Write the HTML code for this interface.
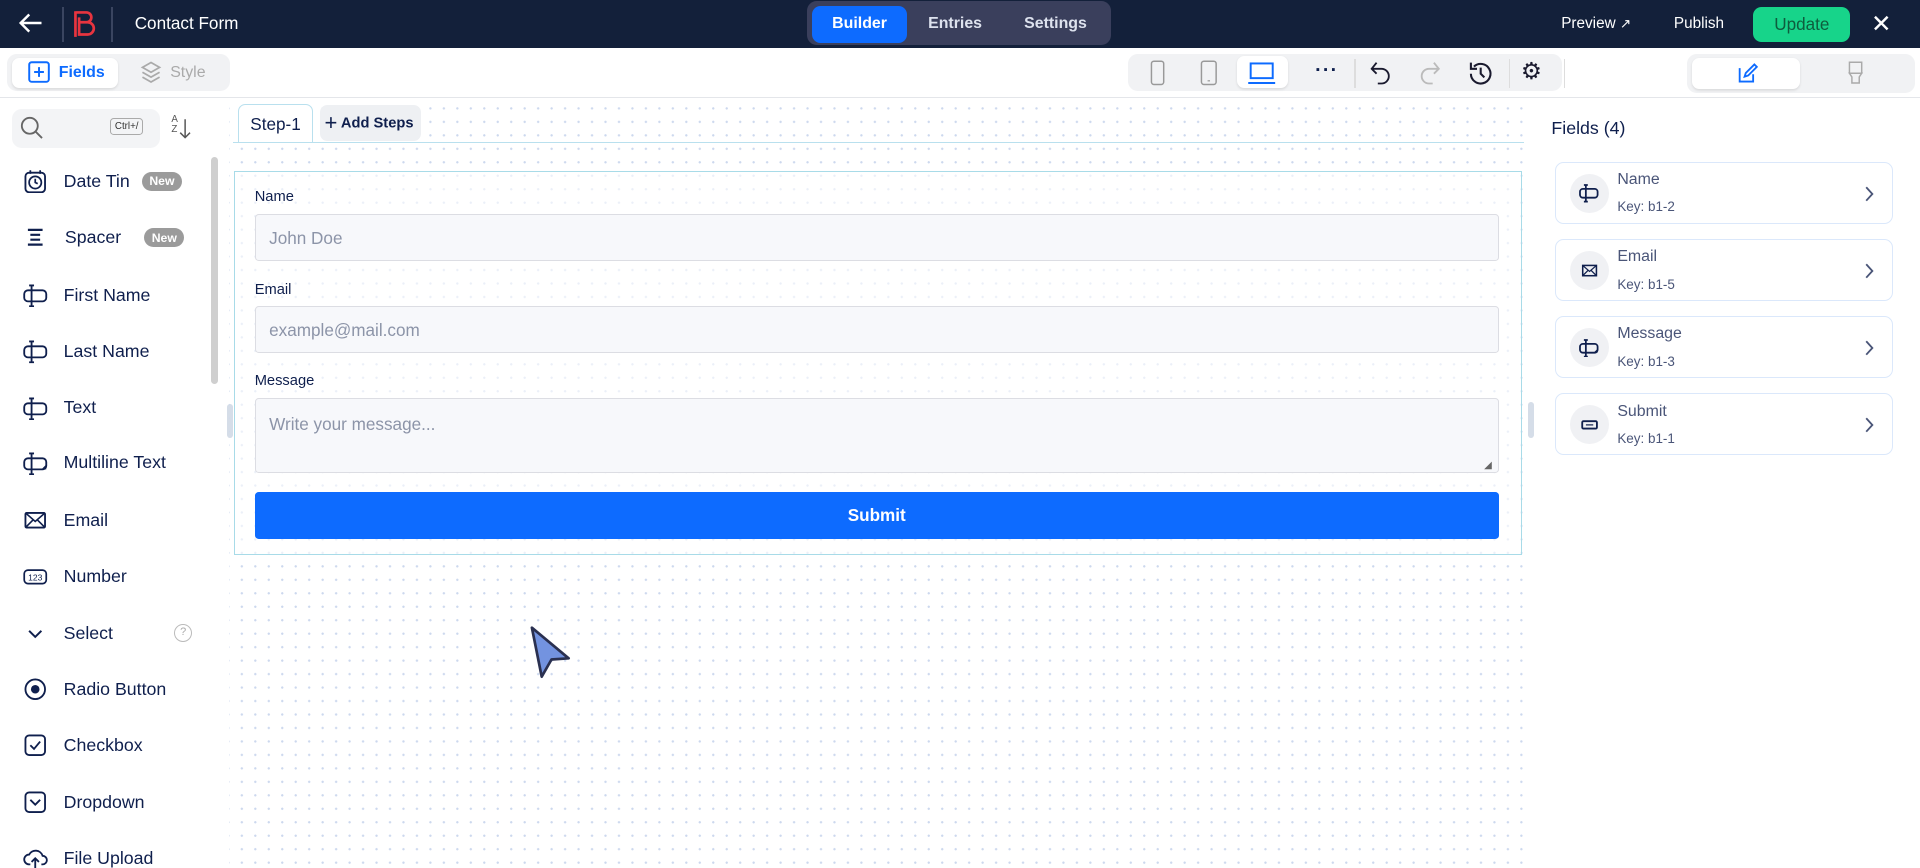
<!DOCTYPE html>
<html><head><meta charset="utf-8"><style>
html,body{margin:0;padding:0;background:#fff;overflow:hidden}
#root{zoom:1.2244898;width:1568px;height:709px;position:relative;font-family:"Liberation Sans",sans-serif;color:#0f1f4d;overflow:hidden}
.a{position:absolute}
.top{left:0;top:0;width:1568px;height:39px;background:#13203a}
.tabs{left:659px;top:1px;width:248px;height:36px;background:#3a3f5c;border-radius:8px}
.tab{position:absolute;top:4px;height:30px;line-height:30px;font-size:13px;font-weight:bold;color:#dde2ee;text-align:center}
.bar2{left:0;top:39px;width:1568px;height:40px;border-bottom:1px solid #e4e6ea}
.grid{left:187px;top:80px;width:1060px;height:629px;background-image:radial-gradient(circle,#ccd8ee 0.8px,transparent 1.1px);background-size:11px 11px;background-position:5px 3px}
.item{position:absolute;left:19px;font-size:14.5px;color:#0f1f4d;display:flex;align-items:center;gap:13px}
.item svg{width:20px;height:20px}
.new{background:#9b9b9b;color:#fff;font-size:10px;font-weight:bold;border-radius:8px;padding:2px 6px}
.lbl{font-size:12px;color:#0f1f4d;left:208px}
.inp{left:208px;width:1016px;height:38px;background:#f7f8fb;border:1px solid #dcdde3;border-radius:3px;box-sizing:border-box;font-size:14px;color:#8c94a8;padding-left:11px;line-height:38px}
.card{left:1270px;width:276px;height:51px;border:1.5px solid #dbe8fb;border-radius:7px;box-sizing:border-box;background:#fff}
.card .ic{position:absolute;left:11px;top:9px;width:32px;height:32px;border-radius:50%;background:#f0f1f4;display:flex;align-items:center;justify-content:center}
.card .t{position:absolute;left:50px;top:7px;font-size:13px;color:#4a5578}
.card .k{position:absolute;left:50px;top:30px;font-size:11px;color:#4a5578}
.card .ch{position:absolute;right:14px;top:18px}
</style></head><body><div id="root">
<div class="a top"></div>
<svg class="a" style="left:14px;top:10px" width="22" height="18" viewBox="0 0 22 18"><path d="M20 9H3M10 2 3 9l7 7" stroke="#fff" stroke-width="2" fill="none"/></svg>
<div class="a" style="left:51px;top:6px;width:1px;height:28px;background:#3a4560"></div>
<svg class="a" style="left:60px;top:8px" width="18" height="23" viewBox="0 0 18 23"><path d="M2 1v21M2 2h9a4 4 0 0 1 0 8H5M5 10h7a5 5 0 0 1 0 10H5V6" stroke="#e8343f" stroke-width="2.2" fill="none"/></svg>
<div class="a" style="left:91px;top:6px;width:1px;height:28px;background:#3a4560"></div>
<div class="a" style="left:110px;top:11px;color:#fff;font-size:14px">Contact Form</div>
<div class="a tabs"><div class="tab" style="left:4px;width:78px;background:#0d6bff;border-radius:7px;color:#fff">Builder</div><div class="tab" style="left:86px;width:70px">Entries</div><div class="tab" style="left:166px;width:74px">Settings</div></div>
<div class="a" style="left:1275px;top:12px;color:#fff;font-size:12.5px">Preview <span style="font-size:11px">&#x2197;</span></div>
<div class="a" style="left:1367px;top:12px;color:#fff;font-size:12.5px">Publish</div>
<div class="a" style="left:1432px;top:6px;width:79px;height:28px;background:#17d48a;border-radius:7px;color:#0e5d3e;font-size:14px;text-align:center;line-height:28px">Update</div>
<div class="a" style="left:1528px;top:7px;color:#fff;font-size:20px">✕</div>

<div class="a bar2"></div>
<div class="a" style="left:6px;top:44px;width:182px;height:30px;background:#f1f2f4;border-radius:8px"></div>
<div class="a" style="left:10px;top:47px;width:86px;height:25px;background:#fff;border-radius:6px;box-shadow:0 1px 2px rgba(0,0,0,.1)"></div>
<svg class="a" style="left:23px;top:50px" width="18" height="18"><rect x="1" y="1" width="16" height="16" rx="2" fill="none" stroke="#0d6bff" stroke-width="1.6"/><path d="M9 5v8M5 9h8" stroke="#0d6bff" stroke-width="1.6"/></svg>
<div class="a" style="left:48px;top:52px;font-size:13px;color:#0d6bff;font-weight:bold">Fields</div>
<svg class="a" style="left:114px;top:49px" width="18" height="20" viewBox="0 0 18 20"><path d="M9 2 2 6l7 4 7-4zM2 10l7 4 7-4M2 14l7 4 7-4" fill="none" stroke="#aaa" stroke-width="1.4"/></svg>
<div class="a" style="left:139px;top:52px;font-size:13px;color:#aaa">Style</div>
<div class="a" style="left:921px;top:44px;width:355px;height:30px;background:#f1f2f4;border-radius:8px"></div>
<div class="a" style="left:1010px;top:46px;width:42px;height:26px;background:#fff;border-radius:6px;box-shadow:0 1px 2px rgba(0,0,0,.1)"></div>
<svg class="a" style="left:938px;top:49px" width="14" height="22"><rect x="2" y="1" width="10" height="19" rx="2" fill="none" stroke="#999" stroke-width="1.2"/></svg>
<svg class="a" style="left:979px;top:49px" width="16" height="22"><rect x="2" y="1" width="12" height="19" rx="2" fill="none" stroke="#999" stroke-width="1.2"/><path d="M7 17h2" stroke="#999"/></svg>
<svg class="a" style="left:1018px;top:50px" width="24" height="20"><rect x="3" y="2" width="18" height="12" fill="none" stroke="#0d6bff" stroke-width="1.6"/><path d="M1 18h22" stroke="#0d6bff" stroke-width="1.6"/></svg>
<div class="a" style="left:1074px;top:48px;font-size:16px;font-weight:bold;letter-spacing:1px">···</div>
<div class="a" style="left:1106px;top:48px;width:1px;height:24px;background:#ddd"></div>
<svg class="a" style="left:1117px;top:48px" width="20" height="24"><path d="M7 3 3 8l4 4M3 8h8a6 6 0 0 1 0 12H8" fill="none" stroke="#1a1a2e" stroke-width="1.5"/></svg>
<svg class="a" style="left:1158px;top:48px" width="20" height="24"><path d="M13 3l4 5-4 4M17 8H9a6 6 0 0 0 0 12h3" fill="none" stroke="#bbb" stroke-width="1.5"/></svg>
<svg class="a" style="left:1197px;top:48px" width="24" height="24"><path d="M4 12a8 8 0 1 0 2.5-5.8M4 3v5h5" fill="none" stroke="#1a1a2e" stroke-width="1.7"/><path d="M12 7v5l3 3" fill="none" stroke="#1a1a2e" stroke-width="1.7"/></svg>
<div class="a" style="left:1232px;top:48px;width:1px;height:24px;background:#ddd"></div>
<div class="a" style="left:1242px;top:47px;font-size:19px;color:#1a1a2e">⚙</div>
<div class="a" style="left:1277px;top:48px;width:1px;height:24px;background:#ddd"></div>
<div class="a" style="left:1378px;top:44px;width:186px;height:32px;background:#f1f2f4;border-radius:8px"></div>
<div class="a" style="left:1382px;top:47px;width:88px;height:26px;background:#fff;border-radius:6px;box-shadow:0 1px 2px rgba(0,0,0,.1)"></div>
<svg class="a" style="left:1418px;top:51px" width="18" height="18"><path d="M3 5v11h11V10" fill="none" stroke="#0d6bff" stroke-width="1.5"/><path d="M7 12l1-3 7-7 2 2-7 7z" fill="none" stroke="#0d6bff" stroke-width="1.5"/></svg>
<svg class="a" style="left:1508px;top:50px" width="14" height="20"><path d="M2 1h10v9H2zM2 10h10l-2 3v5H4v-5z" fill="none" stroke="#aaa" stroke-width="1.2"/></svg>

<!-- left panel -->
<div class="a" style="left:10px;top:89px;width:121px;height:32px;background:#f3f4f6;border-radius:8px"></div>
<svg class="a" style="left:16px;top:95px" width="20" height="20"><circle cx="8" cy="8" r="6.5" fill="none" stroke="#666" stroke-width="1.5"/><path d="M13 13l5 5" stroke="#666" stroke-width="1.5"/></svg>
<div class="a" style="left:90px;top:96px;border:1px solid #aaa;border-radius:3px;font-size:8px;padding:2px 3px;color:#333">Ctrl+/</div>
<div class="a" style="left:140px;top:94px;font-size:8px;color:#555;line-height:8px">A<br>Z</div>
<svg class="a" style="left:146px;top:96px" width="10" height="18"><path d="M5 1v15M1 12l4 4 4-4" fill="none" stroke="#555" stroke-width="1.2"/></svg>
<div class="a" style="left:172px;top:128px;width:6px;height:186px;background:#cfcfcf;border-radius:3px"></div>
<div class="a" style="left:185px;top:330px;width:5px;height:28px;background:#d5dde8;border-radius:3px"></div>

<div class="item" style="top:138px"><svg viewBox="0 0 20 20"><rect x="2" y="3" width="16" height="16" rx="3" fill="none" stroke="#0f1f4d" stroke-width="1.5"/><circle cx="10" cy="11" r="5" fill="none" stroke="#0f1f4d" stroke-width="1.4"/><path d="M10 8v3l2 1M6 1v3M14 1v3" stroke="#0f1f4d" stroke-width="1.4" fill="none"/></svg>Date Tin <span class="new" style="margin-left:-3px">New</span></div>
<div class="item" style="top:184px"><svg viewBox="0 0 20 20"><path d="M4 4h12M4 16h12M6 8h8M6 12h8" stroke="#0f1f4d" stroke-width="1.8"/></svg><span style="margin-left:1px">Spacer</span><span class="new" style="margin-left:6px">New</span></div>
<div class="item" style="top:231px"><svg viewBox="0 0 20 20"><rect x="1" y="6" width="18" height="9" rx="3" fill="none" stroke="#0f1f4d" stroke-width="1.5"/><path d="M7 2v17M5 2h4M5 19h4" stroke="#0f1f4d" stroke-width="1.5"/></svg>First Name</div>
<div class="item" style="top:277px"><svg viewBox="0 0 20 20"><rect x="1" y="6" width="18" height="9" rx="3" fill="none" stroke="#0f1f4d" stroke-width="1.5"/><path d="M7 2v17M5 2h4M5 19h4" stroke="#0f1f4d" stroke-width="1.5"/></svg>Last Name</div>
<div class="item" style="top:323px"><svg viewBox="0 0 20 20"><rect x="1" y="6" width="18" height="9" rx="3" fill="none" stroke="#0f1f4d" stroke-width="1.5"/><path d="M7 2v17M5 2h4M5 19h4" stroke="#0f1f4d" stroke-width="1.5"/></svg>Text</div>
<div class="item" style="top:368px"><svg viewBox="0 0 20 20"><rect x="1" y="6" width="18" height="9" rx="3" fill="none" stroke="#0f1f4d" stroke-width="1.5"/><path d="M7 2v17M5 2h4M5 19h4" stroke="#0f1f4d" stroke-width="1.5"/><path d="M15 15l4-4v4z" fill="#0f1f4d"/></svg>Multiline Text</div>
<div class="item" style="top:415px"><svg viewBox="0 0 20 20"><rect x="2" y="4" width="16" height="12" rx="1" fill="none" stroke="#0f1f4d" stroke-width="1.5"/><path d="M2 4l8 7 8-7M2 16l6-6M18 16l-6-6" fill="none" stroke="#0f1f4d" stroke-width="1.3"/></svg>Email</div>
<div class="item" style="top:461px"><svg viewBox="0 0 20 20"><rect x="1" y="5" width="18" height="11" rx="3" fill="none" stroke="#0f1f4d" stroke-width="1.4"/><text x="10" y="13.5" font-size="7" text-anchor="middle" fill="#0f1f4d" font-family="Liberation Sans">123</text></svg>Number</div>
<div class="item" style="top:507px"><svg viewBox="0 0 20 20"><path d="M5 8l5 5 5-5" fill="none" stroke="#0f1f4d" stroke-width="1.6"/></svg>Select <span style="margin-left:37px;border:1px solid #bbb;border-radius:50%;width:13px;height:13px;font-size:9px;color:#aaa;text-align:center;line-height:13px">?</span></div>
<div class="item" style="top:553px"><svg viewBox="0 0 20 20"><circle cx="10" cy="10" r="8" fill="none" stroke="#0f1f4d" stroke-width="1.5"/><circle cx="10" cy="10" r="3.5" fill="#0f1f4d"/></svg>Radio Button</div>
<div class="item" style="top:599px"><svg viewBox="0 0 20 20"><rect x="2" y="2" width="16" height="16" rx="3" fill="none" stroke="#0f1f4d" stroke-width="1.5"/><path d="M6 10l3 3 5-6" fill="none" stroke="#0f1f4d" stroke-width="1.5"/></svg>Checkbox</div>
<div class="item" style="top:645px"><svg viewBox="0 0 20 20"><rect x="2" y="2" width="16" height="16" rx="3" fill="none" stroke="#0f1f4d" stroke-width="1.5"/><path d="M6 8l4 4 4-4" fill="none" stroke="#0f1f4d" stroke-width="1.5"/></svg>Dropdown</div>
<div class="item" style="top:691px"><svg viewBox="0 0 20 20"><path d="M6 15H5a4 4 0 0 1 0-8 6 6 0 0 1 11 1 3.5 3.5 0 0 1 0 7h-1M10 18v-8M7 13l3-3 3 3" fill="none" stroke="#0f1f4d" stroke-width="1.5"/></svg>File Upload</div>

<!-- canvas -->
<div class="a grid"></div>
<div class="a" style="left:194px;top:85px;width:62px;height:32px;background:#fff;border:1px solid #b9e0ee;border-bottom:none;border-radius:6px 6px 0 0;box-sizing:border-box;font-size:14px;line-height:32px;text-align:center">Step-1</div>
<div class="a" style="left:261px;top:86px;width:83px;height:29px;background:#eef0f3;border-radius:6px;font-size:12px;font-weight:bold;line-height:29px"><span style="font-size:18px;font-weight:normal;margin-left:4px;vertical-align:-2px">+</span> Add Steps</div>
<div class="a" style="left:190px;top:116px;width:1055px;height:1px;background:#b9e0ee"></div>
<div class="a" style="left:191px;top:140px;width:1052px;height:313px;border:1px solid #a8dbe8;box-sizing:border-box;background:rgba(255,255,255,.6)"></div>
<div class="a lbl" style="top:154px">Name</div>
<div class="a inp" style="top:175px">John Doe</div>
<div class="a lbl" style="top:230px">Email</div>
<div class="a inp" style="top:250px">example@mail.com</div>
<div class="a lbl" style="top:305px">Message</div>
<div class="a inp" style="top:325px;height:61px;line-height:42px">Write your message...</div>
<div class="a" style="left:1212px;top:376px;font-size:8px;color:#666">◢</div>
<div class="a" style="left:208px;top:402px;width:1016px;height:38px;background:#0d6bff;border-radius:3px;color:#fff;font-weight:bold;font-size:14px;text-align:center;line-height:38px">Submit</div>
<svg class="a" style="left:430px;top:510px" width="38" height="48"><path d="M4 3l30 25-14 1-8 14z" fill="#7393e0" stroke="#2a3050" stroke-width="2.2" stroke-linejoin="round"/></svg>
<div class="a" style="left:1248px;top:328px;width:5px;height:30px;background:#d5dde8;border-radius:3px"></div>

<!-- right -->
<div class="a" style="left:1267px;top:96px;font-size:14.5px;color:#0f1f4d">Fields (4)</div>
<div class="a card" style="top:132px"><div class="ic"><svg width="16" height="16" viewBox="0 0 20 20"><rect x="1" y="6" width="18" height="9" rx="3" fill="none" stroke="#0f1f4d" stroke-width="1.8"/><path d="M7 2v17M5 2h4M5 19h4" stroke="#0f1f4d" stroke-width="1.8"/></svg></div><div class="t">Name</div><div class="k">Key: b1-2</div><div class="ch"><svg width="8" height="13"><path d="M1 1l5 5.5L1 12" fill="none" stroke="#4a5578" stroke-width="1.5"/></svg></div></div>
<div class="a card" style="top:195px"><div class="ic"><svg width="14" height="14" viewBox="0 0 20 20"><rect x="2" y="4" width="16" height="12" fill="none" stroke="#0f1f4d" stroke-width="1.8"/><path d="M2 4l8 7 8-7M2 16l6-6M18 16l-6-6" fill="none" stroke="#0f1f4d" stroke-width="1.5"/></svg></div><div class="t">Email</div><div class="k">Key: b1-5</div><div class="ch"><svg width="8" height="13"><path d="M1 1l5 5.5L1 12" fill="none" stroke="#4a5578" stroke-width="1.5"/></svg></div></div>
<div class="a card" style="top:258px"><div class="ic"><svg width="16" height="16" viewBox="0 0 20 20"><rect x="1" y="6" width="18" height="9" rx="3" fill="none" stroke="#0f1f4d" stroke-width="1.8"/><path d="M7 2v17M5 2h4M5 19h4" stroke="#0f1f4d" stroke-width="1.8"/><path d="M15 15l4-4v4z" fill="#0f1f4d"/></svg></div><div class="t">Message</div><div class="k">Key: b1-3</div><div class="ch"><svg width="8" height="13"><path d="M1 1l5 5.5L1 12" fill="none" stroke="#4a5578" stroke-width="1.5"/></svg></div></div>
<div class="a card" style="top:321px"><div class="ic"><svg width="14" height="8"><rect x="1" y="1" width="12" height="6" rx="1" fill="none" stroke="#0f1f4d" stroke-width="1.5"/><path d="M4 4h6" stroke="#0f1f4d"/></svg></div><div class="t">Submit</div><div class="k">Key: b1-1</div><div class="ch"><svg width="8" height="13"><path d="M1 1l5 5.5L1 12" fill="none" stroke="#4a5578" stroke-width="1.5"/></svg></div></div>
</div></body></html>
